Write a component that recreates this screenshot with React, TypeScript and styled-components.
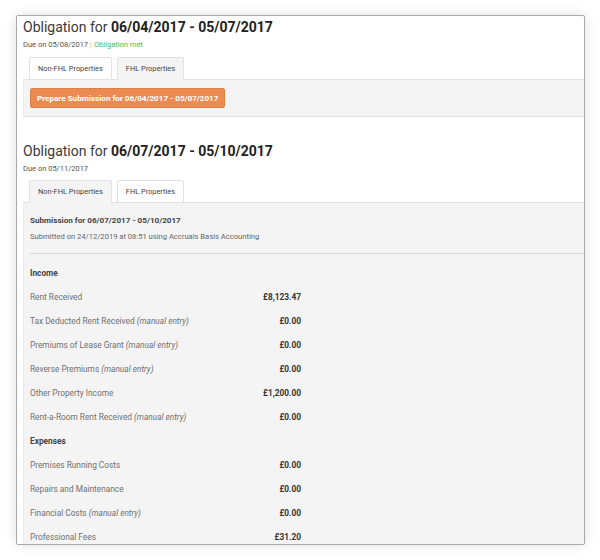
import React from "react";
import styled, { createGlobalStyle } from "styled-components";

const Global = createGlobalStyle`
  html, body { margin: 0; padding: 0; background: #ffffff; }
  body { font-family: Roboto, "Liberation Sans", Arial, sans-serif; }
  * { box-sizing: border-box; }
`;

const Page = styled.div`
  width: 600px;
  height: 560px;
  padding: 15px 0 0 16px;
`;

const Frame = styled.div`
  width: 569px;
  height: 530px;
  border: 1px solid #a9a9a9;
  border-radius: 2px;
  background: #ffffff;
  box-shadow: 0 0 12px rgba(0, 0, 0, 0.13);
  overflow: hidden;
  padding-left: 6px;
`;

const Section = styled.section<{ $gap?: number }>`
  margin-top: ${(p) => p.$gap ?? 0}px;
`;

const Title = styled.h2`
  margin: 0;
  height: 23px;
  line-height: 23px;
  font-size: 14px;
  font-weight: 400;
  color: #3a3a3a;
  white-space: nowrap;
  b { font-weight: 700; color: #222; }
`;

const Due = styled.div`
  height: 12px;
  line-height: 12px;
  font-size: 7.5px;
  color: #555;
  span.sep { color: #bbb; margin: 0 2px; }
  span.met { color: #3fbf4a; }
`;

const Tabs = styled.div<{ $mt: number }>`
  display: flex;
  gap: 5px;
  padding-left: 6px;
  margin-top: ${(p) => p.$mt}px;
  position: relative;
  z-index: 1;
  margin-bottom: -1px;
`;

const Tab = styled.div<{ $active?: boolean }>`
  height: 23px;
  line-height: 22px;
  padding: 0 8px;
  font-size: 7.4px;
  color: #444;
  border: 1px solid #e2e2e2;
  border-bottom: ${(p) => (p.$active ? "1px solid #f4f4f4" : "1px solid #e2e2e2")};
  border-radius: 2px 2px 0 0;
  background: ${(p) => (p.$active ? "#f4f4f4" : "#ffffff")};
  white-space: nowrap;
`;

const Panel = styled.div<{ $pad: string }>`
  background: #f4f4f4;
  border-top: 1px solid #e2e2e2;
  border-bottom: 1px solid #e2e2e2;
  border-left: 1px solid #ececec;
  padding: ${(p) => p.$pad};
  width: 600px;
`;

const PrepareButton = styled.button`
  display: block;
  height: 20px;
  padding: 0 6px;
  border: 1px solid #e07f43;
  border-radius: 2px;
  background: #eb8b51;
  color: #ffffff;
  font-family: inherit;
  font-size: 8.1px;
  font-weight: 700;
  white-space: nowrap;
  cursor: pointer;
`;

const SubTitle = styled.div`
  height: 12px;
  line-height: 12px;
  font-size: 8.1px;
  font-weight: 700;
  color: #444;
`;

const SubInfo = styled.div`
  margin-top: 5px;
  height: 12px;
  line-height: 12px;
  font-size: 7.6px;
  color: #666;
`;

const Divider = styled.hr`
  margin: 10px 0 7px 0;
  border: 0;
  border-top: 1px solid #dcdcdc;
`;

const Rows = styled.div`
  width: 271px;
`;

const Row = styled.div`
  display: flex;
  justify-content: space-between;
  align-items: center;
  height: 24px;
  font-size: 8.3px;
`;

const Heading = styled.div`
  height: 24px;
  line-height: 24px;
  font-size: 8.3px;
  font-weight: 700;
  color: #444;
`;

const Label = styled.span`
  color: #707070;
  i { font-style: italic; }
`;

const Value = styled.span`
  color: #333;
  font-weight: 700;
`;

type Item = { label: string; manual?: boolean; value: string };

const income: Item[] = [
  { label: "Rent Received", value: "£8,123.47" },
  { label: "Tax Deducted Rent Received", manual: true, value: "£0.00" },
  { label: "Premiums of Lease Grant", manual: true, value: "£0.00" },
  { label: "Reverse Premiums", manual: true, value: "£0.00" },
  { label: "Other Property Income", value: "£1,200.00" },
  { label: "Rent-a-Room Rent Received", manual: true, value: "£0.00" },
];

const expenses: Item[] = [
  { label: "Premises Running Costs", value: "£0.00" },
  { label: "Repairs and Maintenance", value: "£0.00" },
  { label: "Financial Costs", manual: true, value: "£0.00" },
  { label: "Professional Fees", value: "£31.20" },
];

const ItemRow = ({ item }: { item: Item }) => (
  <Row>
    <Label>
      {item.label}
      {item.manual && (
        <>
          {" "}
          <i>(manual entry)</i>
        </>
      )}
    </Label>
    <Value>{item.value}</Value>
  </Row>
);

export default function App() {
  return (
    <>
      <Global />
      <Page>
        <Frame>
          <Section>
            <Title>
              Obligation for <b>06/04/2017 - 05/07/2017</b>
            </Title>
            <Due>
              Due on 05/08/2017<span className="sep">|</span>
              <span className="met">Obligation met</span>
            </Due>
            <Tabs $mt={6}>
              <Tab>Non-FHL Properties</Tab>
              <Tab $active>FHL Properties</Tab>
            </Tabs>
            <Panel $pad="8px 6px 8px 6px">
              <PrepareButton>Prepare Submission for 06/04/2017 - 05/07/2017</PrepareButton>
            </Panel>
          </Section>
          <Section $gap={23}>
            <Title>
              Obligation for <b>06/07/2017 - 05/10/2017</b>
            </Title>
            <Due>Due on 05/11/2017</Due>
            <Tabs $mt={5}>
              <Tab $active>Non-FHL Properties</Tab>
              <Tab>FHL Properties</Tab>
            </Tabs>
            <Panel $pad="11px 0 0 6px">
              <SubTitle>Submission for 06/07/2017 - 05/10/2017</SubTitle>
              <SubInfo>Submitted on 24/12/2019 at 08:51 using Accruals Basis Accounting</SubInfo>
              <Divider />
              <Rows>
                <Heading>Income</Heading>
                {income.map((it) => (
                  <ItemRow key={it.label} item={it} />
                ))}
                <Heading>Expenses</Heading>
                {expenses.map((it) => (
                  <ItemRow key={it.label} item={it} />
                ))}
              </Rows>
            </Panel>
          </Section>
        </Frame>
      </Page>
    </>
  );
}
